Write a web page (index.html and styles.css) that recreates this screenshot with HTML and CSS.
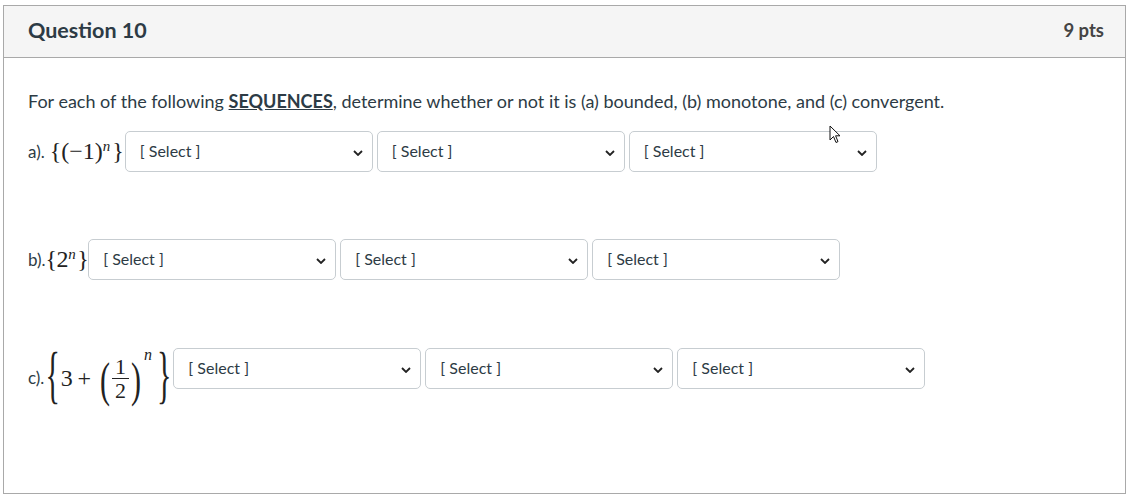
FILE: index.html
```html
<!DOCTYPE html>
<html>
<head>
<meta charset="utf-8">
<link rel="stylesheet" href="styles.css">
</head>
<body>
<div class="card">
  <div class="card-head">
    <span class="title">Question 10</span>
    <span class="pts">9 pts</span>
  </div>
  <div class="card-body">
    <p class="intro">For each of the following <strong class="u">SEQUENCES</strong>, determine whether or not it is (a) bounded, (b) monotone, and (c) convergent.</p>

    <div class="row row-a">
      <span class="label">a).</span>
      <span class="math m-a">{(−1)<sup class="sup">n</sup>}</span>
      <div class="selects">
        <div class="sel"><span>[ Select ]</span><svg class="chev" viewBox="0 0 10 6" width="10" height="6"><path d="M1 1 L5 5 L9 1" fill="none" stroke="#222" stroke-width="1.8"/></svg></div>
        <div class="sel"><span>[ Select ]</span><svg class="chev" viewBox="0 0 10 6" width="10" height="6"><path d="M1 1 L5 5 L9 1" fill="none" stroke="#222" stroke-width="1.8"/></svg></div>
        <div class="sel"><span>[ Select ]</span><svg class="chev" viewBox="0 0 10 6" width="10" height="6"><path d="M1 1 L5 5 L9 1" fill="none" stroke="#222" stroke-width="1.8"/></svg></div>
      </div>
    </div>

    <div class="row row-b">
      <span class="label">b).</span>
      <span class="math m-b">{2<sup class="sup">n</sup>}</span>
      <div class="selects">
        <div class="sel"><span>[ Select ]</span><svg class="chev" viewBox="0 0 10 6" width="10" height="6"><path d="M1 1 L5 5 L9 1" fill="none" stroke="#222" stroke-width="1.8"/></svg></div>
        <div class="sel"><span>[ Select ]</span><svg class="chev" viewBox="0 0 10 6" width="10" height="6"><path d="M1 1 L5 5 L9 1" fill="none" stroke="#222" stroke-width="1.8"/></svg></div>
        <div class="sel"><span>[ Select ]</span><svg class="chev" viewBox="0 0 10 6" width="10" height="6"><path d="M1 1 L5 5 L9 1" fill="none" stroke="#222" stroke-width="1.8"/></svg></div>
      </div>
    </div>

    <div class="row row-c">
      <span class="label label-c">c).</span>
      <span class="math m-c">
        <span class="bigbrace">{</span>
        <span class="plain">3&#8201;+&#8201;</span>
        <span class="bigparen">(</span>
        <span class="frac"><span class="num">1</span><span class="den">2</span></span>
        <span class="bigparen">)</span>
        <span class="csup">n</span>
        <span class="bigbrace">}</span>
      </span>
      <div class="selects selects-c">
        <div class="sel"><span>[ Select ]</span><svg class="chev" viewBox="0 0 10 6" width="10" height="6"><path d="M1 1 L5 5 L9 1" fill="none" stroke="#222" stroke-width="1.8"/></svg></div>
        <div class="sel"><span>[ Select ]</span><svg class="chev" viewBox="0 0 10 6" width="10" height="6"><path d="M1 1 L5 5 L9 1" fill="none" stroke="#222" stroke-width="1.8"/></svg></div>
        <div class="sel"><span>[ Select ]</span><svg class="chev" viewBox="0 0 10 6" width="10" height="6"><path d="M1 1 L5 5 L9 1" fill="none" stroke="#222" stroke-width="1.8"/></svg></div>
      </div>
    </div>
  </div>
  <svg class="cursor" viewBox="0 0 12 19" width="12" height="19"><path d="M1 1 L1 15 L4.5 11.5 L7 17.5 L9 16.6 L6.6 10.8 L11 10.8 Z" fill="#fff" stroke="#111" stroke-width="1"/></svg>
</div>
</body>
</html>
```

FILE: styles.css
```css
html, body {
  margin: 0;
  padding: 0;
  background: #fff;
}
body {
  font-family: Lato, "Liberation Sans", sans-serif;
  color: #2d3b45;
}
.card {
  position: relative;
  margin: 5px 6px 0 3px;
  height: 489px;
  border: 1px solid #a9a9a9;
  box-sizing: border-box;
}
.card-head {
  height: 52px;
  background: #f5f5f5;
  border-bottom: 1px solid #a9a9a9;
  box-sizing: border-box;
  display: flex;
  align-items: center;
  justify-content: space-between;
  padding: 0 21px 4px 24px;
}
.title {
  font-weight: 700;
  font-size: 21.5px;
  color: #2d3b45;
}
.pts {
  font-weight: 700;
  font-size: 18.5px;
  color: #444;
}
.card-body {
  padding: 0 24px;
}
.intro {
  margin: 31px 0 0;
  font-size: 18px;
  line-height: 24px;
}
.u {
  text-decoration: underline;
  font-weight: 700;
}
.row {
  display: flex;
  align-items: center;
}
.row-a { margin-top: 18px; }
.row-b { margin-top: 67px; }
.row-c { margin-top: 67px; align-items: flex-start; }
.label {
  font-size: 17px;
  color: #2d3b45;
}
.label-c { margin-top: 20px; }
.math {
  font-family: "Liberation Serif", "DejaVu Serif", serif;
  font-size: 24px;
  color: #222;
}
.sup {
  font-style: italic;
  font-size: 15px;
  vertical-align: 8px;
  line-height: 0;
  margin-right: 2px;
}
.m-a { margin-left: 5px; margin-right: 1px; }
.m-b { margin-left: 0; margin-right: 0; letter-spacing: -0.5px; }
.selects {
  display: flex;
  gap: 4px;
}
.sel {
  width: 248px;
  height: 41px;
  box-sizing: border-box;
  border: 1px solid #c7cdd1;
  border-radius: 5px;
  display: flex;
  align-items: center;
  justify-content: space-between;
  padding: 0 9px 0 14px;
  font-size: 16px;
  color: #2d3b45;
  background: #fff;
}
.sel span { margin-top: -3px; }
.chev { margin-top: 2px; }
.m-c {
  display: flex;
  align-items: center;
  height: 58px;
  margin-left: 1px;
  margin-right: 2px;
}
.bigbrace {
  display: inline-block;
  font-size: 30px;
  line-height: 30px;
  transform: scaleY(2.1);
  margin-top: -3px;
}
.plain {
  font-size: 24px;
  margin: 4px 4px 0 1px;
  white-space: pre;
}
.bigparen {
  display: inline-block;
  font-size: 30px;
  line-height: 30px;
  transform: scaleY(1.65);
  margin-top: 5px;
}
.frac {
  display: inline-flex;
  flex-direction: column;
  align-items: center;
  font-size: 22px;
  line-height: 21px;
  margin: 5px 2px 0;
}
.num {
  padding: 0 3px 1px;
  border-bottom: 1px solid #222;
}
.den {
  padding-top: 1px;
}
.csup {
  font-style: italic;
  font-size: 16px;
  align-self: flex-start;
  margin: -1px 5px 0 3px;
}
.selects-c { margin-top: 1px; }
.cursor {
  position: absolute;
  left: 825px;
  top: 119px;
}
```
